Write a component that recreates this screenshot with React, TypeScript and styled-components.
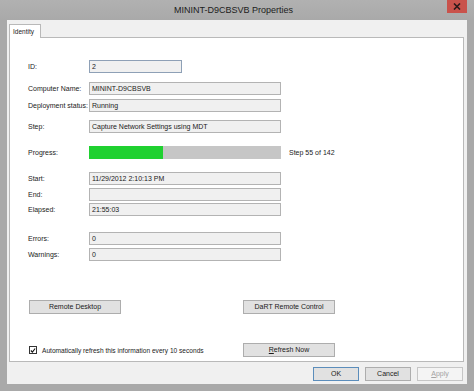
import styled, { createGlobalStyle } from 'styled-components';

const GlobalStyle = createGlobalStyle`
  html, body {
    margin: 0;
    padding: 0;
    background: #a9a9a9;
  }
  * {
    box-sizing: border-box;
  }
`;

const TOTAL_STEPS = 142;
const CURRENT_STEP = 55;

interface FieldRow {
  label: string;
  value: string;
  gap: number;
}

const topRows: FieldRow[] = [
  { label: 'Computer Name:', value: 'MININT-D9CBSVB', gap: 9 },
  { label: 'Deployment status:', value: 'Running', gap: 4 },
  { label: 'Step:', value: 'Capture Network Settings using MDT', gap: 8 },
];

const timeRows: FieldRow[] = [
  { label: 'Start:', value: '11/29/2012 2:10:13 PM', gap: 13 },
  { label: 'End:', value: '', gap: 3 },
  { label: 'Elapsed:', value: '21:55:03', gap: 2 },
];

const countRows: FieldRow[] = [
  { label: 'Errors:', value: '0', gap: 16 },
  { label: 'Warnings:', value: '0', gap: 3 },
];

const App = () => {
  const pct = (CURRENT_STEP / TOTAL_STEPS) * 100;
  const renderRow = (r: FieldRow) => (
    <Row key={r.label} $gap={r.gap}>
      <Label>{r.label}</Label>
      <Field>{r.value}</Field>
    </Row>
  );

  return (
    <>
      <GlobalStyle />
      <Window>
        <TitleBar>
          <span />
          <Title>MININT-D9CBSVB Properties</Title>
          <CloseButton>
            <svg width="8" height="7" viewBox="0 0 8 7">
              <path d="M1 0.5 L7 6.5 M7 0.5 L1 6.5" stroke="#2b1a1a" strokeWidth="1.6" />
            </svg>
          </CloseButton>
        </TitleBar>
        <Client>
          <TabStrip>
            <Tab>Identity</Tab>
          </TabStrip>
          <TabPage>
            <Row $gap={0}>
              <Label>ID:</Label>
              <Field $narrow $focused>2</Field>
            </Row>
            {topRows.map(renderRow)}
            <Row $gap={13}>
              <Label>Progress:</Label>
              <ProgressTrack>
                <ProgressFill style={{ width: `${pct}%` }} />
              </ProgressTrack>
              <StepText>Step {CURRENT_STEP} of {TOTAL_STEPS}</StepText>
            </Row>
            {timeRows.map(renderRow)}
            {countRows.map(renderRow)}
            <ActionRow $gap={39}>
              <Button>Remote Desktop</Button>
              <Button>DaRT Remote Control</Button>
            </ActionRow>
            <ActionRow $gap={29}>
              <CheckLabel>
                <CheckBox>
                  <svg width="7" height="7" viewBox="0 0 7 7">
                    <path d="M1 3.5 L2.8 5.4 L6 1.2" stroke="#111" strokeWidth="1.3" fill="none" />
                  </svg>
                </CheckBox>
                Automatically refresh this information every 10 seconds
              </CheckLabel>
              <Button>
                <u>R</u>efresh Now
              </Button>
            </ActionRow>
          </TabPage>
          <DialogButtons>
            <DialogButton $default>OK</DialogButton>
            <DialogButton>Cancel</DialogButton>
            <DialogButton $disabled>
              <u>A</u>pply
            </DialogButton>
          </DialogButtons>
        </Client>
      </Window>
    </>
  );
};

const Window = styled.div`
  width: 474px;
  height: 391px;
  display: flex;
  flex-direction: column;
  background: #a9a9a9;
  font-family: 'Liberation Sans', Arial, sans-serif;
  color: #1a1a1a;
`;

const TitleBar = styled.div`
  height: 20px;
  display: grid;
  grid-template-columns: 1fr auto 1fr;
  align-items: start;
  padding-right: 7px;
  background: linear-gradient(#b1b1b1, #a9a9a9);
`;

const Title = styled.div`
  font-size: 9px;
  line-height: 20px;
  color: #1c1c1c;
`;

const CloseButton = styled.div`
  justify-self: end;
  width: 20px;
  height: 13px;
  background: #c9524b;
  display: flex;
  align-items: center;
  justify-content: center;
`;

const Client = styled.div`
  flex: 1;
  margin: 0 7px 7px 7px;
  background: #f0f0f0;
  padding: 4px 3px 3px 2px;
  display: flex;
  flex-direction: column;
`;

const TabStrip = styled.div`
  display: flex;
  height: 14px;
  margin-bottom: -1px;
  position: relative;
  z-index: 1;
`;

const Tab = styled.div`
  width: 32px;
  height: 14px;
  border: 1px solid #b9b9b9;
  border-bottom: none;
  background: #fff;
  font-size: 6.5px;
  padding: 3px 0 0 3px;
`;

const TabPage = styled.div`
  height: 325px;
  border: 1px solid #b9b9b9;
  background: #fff;
  padding: 22px 0 0 18px;
  display: flex;
  flex-direction: column;
`;

const Row = styled.div<{ $gap: number }>`
  display: flex;
  align-items: center;
  margin-top: ${(p) => p.$gap}px;
  height: 13px;
`;

const Label = styled.div`
  width: 61px;
  font-size: 7px;
  white-space: nowrap;
  color: #222;
`;

const Field = styled.div<{ $narrow?: boolean; $focused?: boolean }>`
  width: ${(p) => (p.$narrow ? 93 : 192)}px;
  height: 13px;
  border: 1px solid ${(p) => (p.$focused ? '#8ea0b6' : '#b3b3b3')};
  background: #f0f0f0;
  font-size: 7px;
  line-height: 11px;
  padding-left: 2px;
  white-space: nowrap;
  color: #1a1a1a;
`;

const ProgressTrack = styled.div`
  width: 192px;
  height: 13px;
  background: #c6c6c6;
  display: flex;
`;

const ProgressFill = styled.div`
  height: 100%;
  background: #1fd130;
`;

const StepText = styled.div`
  margin-left: 8px;
  font-size: 7px;
  color: #222;
`;

const ActionRow = styled.div<{ $gap: number }>`
  display: grid;
  grid-template-columns: 214px auto;
  align-items: center;
  margin-top: ${(p) => p.$gap}px;
  padding-left: 1px;
`;

const Button = styled.div`
  width: 92px;
  height: 14px;
  border: 1px solid #adadad;
  background: #e1e1e1;
  font-size: 7px;
  line-height: 12px;
  text-align: center;
  color: #1a1a1a;
`;

const CheckLabel = styled.div`
  display: flex;
  align-items: center;
  gap: 5px;
  font-size: 6.6px;
  color: #222;
  white-space: nowrap;
`;

const CheckBox = styled.div`
  width: 8px;
  height: 8px;
  border: 1px solid #333;
  background: #fff;
  display: flex;
  align-items: center;
  justify-content: center;
`;

const DialogButtons = styled.div`
  display: flex;
  justify-content: flex-end;
  gap: 6px;
  margin-top: 5px;
  padding-right: 1px;
`;

const DialogButton = styled.div<{ $default?: boolean; $disabled?: boolean }>`
  width: 46px;
  height: 14px;
  border: 1px solid
    ${(p) => (p.$default ? '#5b8dbb' : p.$disabled ? '#c6c6c6' : '#adadad')};
  background: ${(p) => (p.$disabled ? '#f4f4f4' : '#e1e1e1')};
  color: ${(p) => (p.$disabled ? '#a3a3a3' : '#1a1a1a')};
  font-size: 7px;
  line-height: 12px;
  text-align: center;
`;

export default App;
